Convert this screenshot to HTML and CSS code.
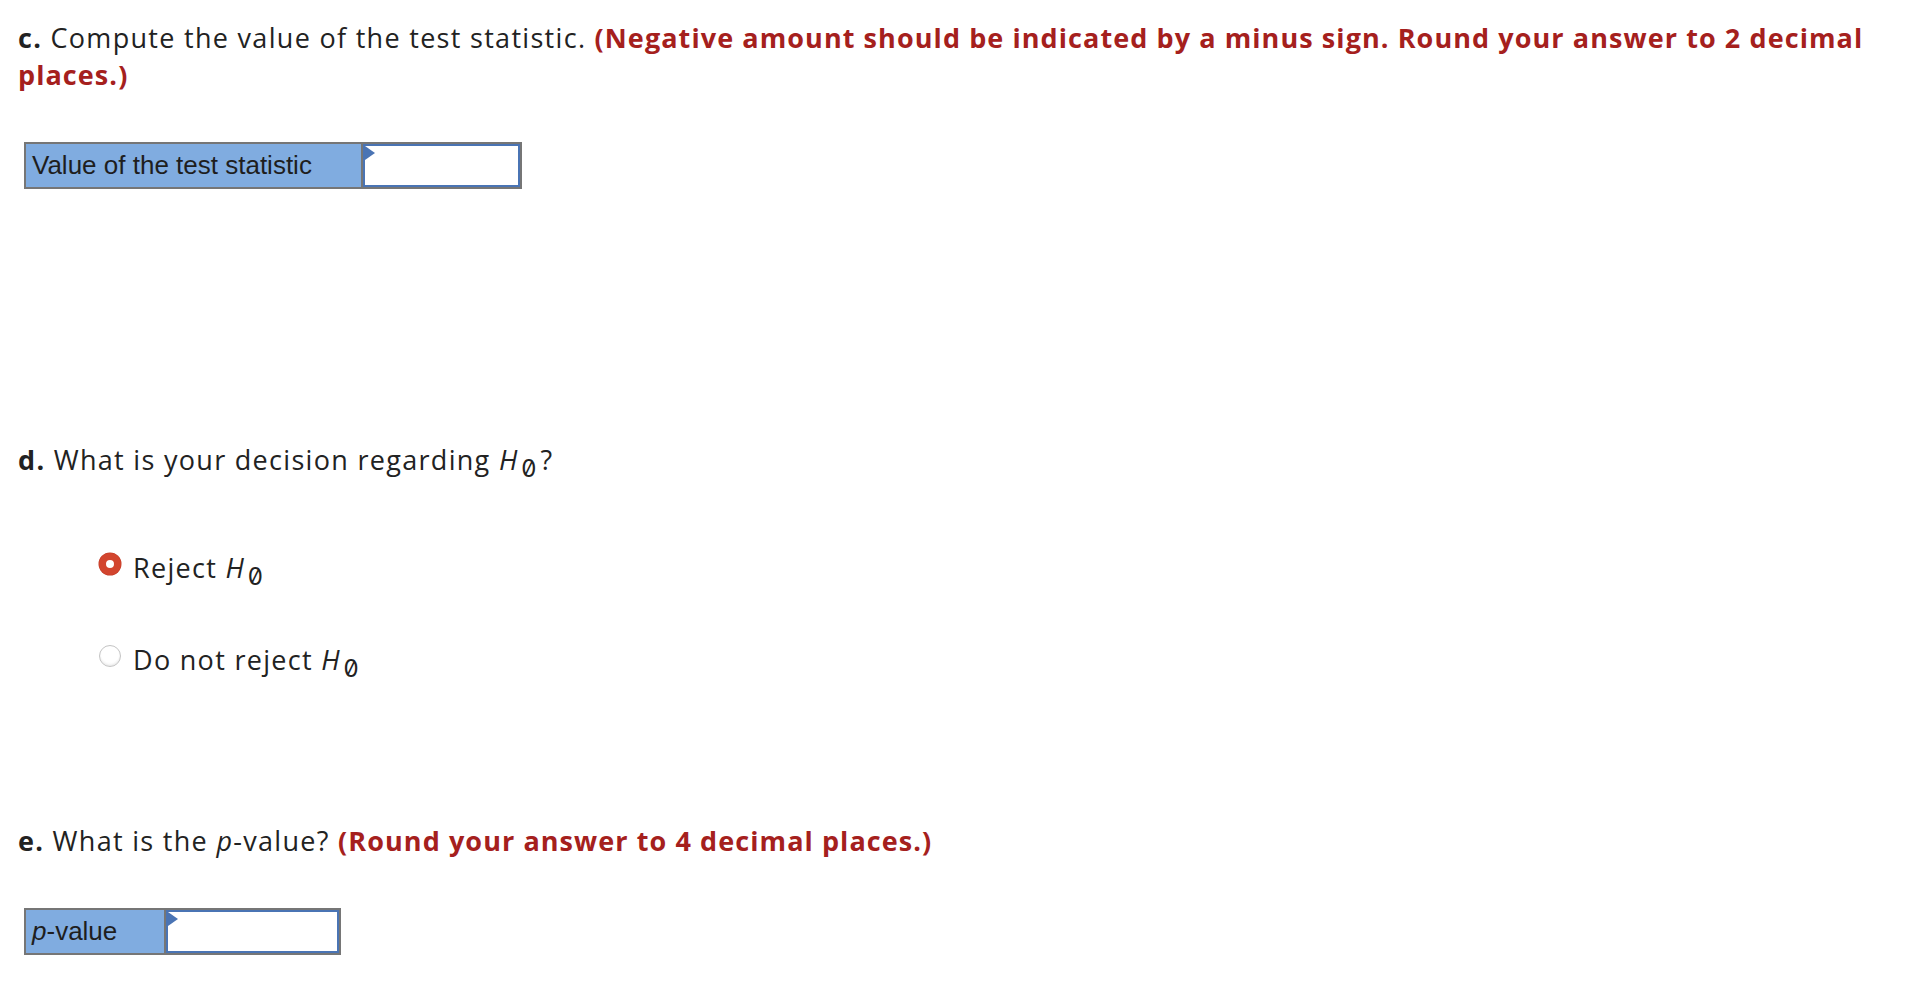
FILE: index.html
```html
<!DOCTYPE html>
<html lang="en">
<head>
<meta charset="utf-8">
<title>Hypothesis test</title>
<link rel="stylesheet" href="styles.css">
</head>
<body>
<div class="page">
  <p class="q q-c"><b class="lead">c.</b> Compute the value of the test statistic. <strong class="note">(Negative amount should be indicated by a minus sign. Round your answer to 2 decimal places.)</strong></p>

  <div class="field field-c">
    <div class="flabel flabel-c">Value of the test statistic</div>
    <div class="finput finput-c"><span class="tri"></span></div>
  </div>

  <p class="q q-d"><b class="lead">d.</b> What is your decision regarding <i class="hv">H</i><span class="zero">0</span>?</p>

  <div class="opts">
    <div class="opt opt-1"><span class="radio radio-on"></span><span class="otext">Reject <i class="hv">H</i><span class="zero">0</span></span></div>
    <div class="opt opt-2"><span class="radio"></span><span class="otext">Do not reject <i class="hv">H</i><span class="zero">0</span></span></div>
  </div>

  <p class="q q-e"><b class="lead">e.</b> What is the <i>p</i>-value? <strong class="note">(Round your answer to 4 decimal places.)</strong></p>

  <div class="field field-e">
    <div class="flabel flabel-e"><i>p</i>-value</div>
    <div class="finput finput-e"><span class="tri"></span></div>
  </div>
</div>
</body>
</html>
```
FILE: styles.css
```css
html, body {
  margin: 0;
  padding: 0;
  background: #ffffff;
}

.page {
  padding: 19px 0 0 18px;
  font-family: "Open Sans", "Noto Sans", sans-serif;
  color: #222222;
}

.q {
  margin: 0;
  font-size: 27px;
  line-height: 37px;
  letter-spacing: 1.3px;
}

.lead {
  font-weight: 700;
  color: #222222;
}

.note {
  font-weight: 700;
  color: #a5201d;
  letter-spacing: 1.08px;
}

.hv {
  font-style: italic;
  letter-spacing: 0;
  margin-right: 2px;
}

.zero {
  font-family: Inter, "DejaVu Sans Mono", monospace;
  font-feature-settings: "zero" 1;
  font-size: 24px;
  letter-spacing: 0;
  line-height: 0;
  vertical-align: -7px;
  margin-left: 2px;
  margin-right: 4px;
}

.q-d { margin-top: 252px; }
.q-e { margin-top: 144px; }

/* answer field */
.field {
  display: flex;
  width: max-content;
  margin-left: 6px;
  border: 2px solid #767676;
  font-family: "Liberation Sans", Arial, sans-serif;
  font-size: 26px;
  color: #1e1e1e;
}

.field-c { margin-top: 49px; }
.field-e { margin-top: 49px; }

.flabel {
  box-sizing: border-box;
  height: 43px;
  line-height: 43px;
  padding: 0 6px;
  background: #80ace0;
  border-right: 2px solid #767676;
  white-space: nowrap;
}

.flabel-c { width: 337px; }
.flabel-e { width: 140px; }

.finput {
  position: relative;
  box-sizing: border-box;
  height: 43px;
  background: #ffffff;
  border: 2px solid #4a74b4;
}

.finput-c { width: 157px; }
.finput-e { width: 173px; }

.tri {
  position: absolute;
  left: 0;
  top: 0;
  width: 0;
  height: 0;
  border-left: 10px solid #4a74b4;
  border-top: 7px solid transparent;
  border-bottom: 7px solid transparent;
}

/* radio options */
.opts {
  display: flex;
  flex-direction: column;
}

.opt {
  display: flex;
  align-items: flex-start;
  margin-left: 81px;
  font-size: 27px;
  line-height: 37px;
  letter-spacing: 1.3px;
}

.opt-1 { margin-top: 71px; }
.opt-2 { margin-top: 55px; }

.radio {
  box-sizing: border-box;
  flex: none;
  width: 22px;
  height: 22px;
  margin-top: 4px;
  margin-right: 12px;
  border-radius: 50%;
  border: 1px solid #c4c4c4;
  background: radial-gradient(circle at 50% 35%, #ffffff 0%, #ffffff 55%, #eeeeee 100%);
  box-shadow: inset 0 -1px 2px rgba(0, 0, 0, 0.06);
}

.radio-on {
  border: 7px solid #d2452e;
  background: #ffffff;
  box-shadow: 0 0 0 0.5px #c23c27;
}
```
